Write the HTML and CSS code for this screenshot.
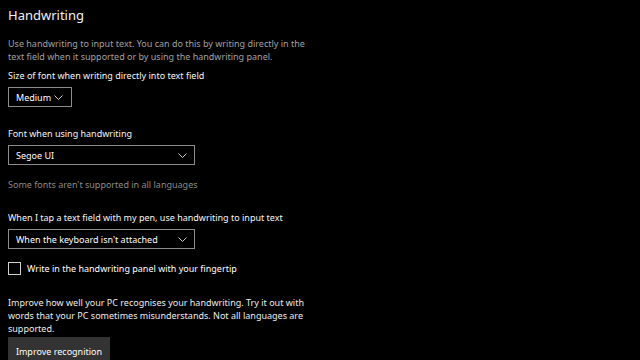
FILE: index.html
```html
<!DOCTYPE html>
<html lang="en">
<head>
    <meta charset="UTF-8">
    <title>Handwriting</title>
    <link rel="stylesheet" href="styles.css">
</head>
<body>

<div class="page">
    <h1 class="title">Handwriting</h1>

    <p class="desc">Use handwriting to input text. You can do this by writing directly in the<br>text field when it supported or by using the handwriting panel.</p>

    <div class="label label-first">Size of font when writing directly into text field</div>
    <div class="select select-small">
        <span>Medium</span>
        <svg class="chevron" width="9" height="5" viewBox="0 0 9 5"><path d="M0.5 0.5 L4.5 4.5 L8.5 0.5" fill="none" stroke="#ccc" stroke-width="1"/></svg>
    </div>

    <div class="label label-gap">Font when using handwriting</div>
    <div class="select select-wide">
        <span>Segoe UI</span>
        <svg class="chevron" width="9" height="5" viewBox="0 0 9 5"><path d="M0.5 0.5 L4.5 4.5 L8.5 0.5" fill="none" stroke="#ccc" stroke-width="1"/></svg>
    </div>
    <div class="hint">Some fonts aren't supported in all languages</div>

    <div class="label label-gap">When I tap a text field with my pen, use handwriting to input text</div>
    <div class="select select-wide">
        <span>When the keyboard isn't attached</span>
        <svg class="chevron" width="9" height="5" viewBox="0 0 9 5"><path d="M0.5 0.5 L4.5 4.5 L8.5 0.5" fill="none" stroke="#ccc" stroke-width="1"/></svg>
    </div>

    <label class="check-row">
        <span class="checkbox"></span>
        <span>Write in the handwriting panel with your fingertip</span>
    </label>

    <p class="para">Improve how well your PC recognises your handwriting. Try it out with<br>words that your PC sometimes misunderstands. Not all languages are<br>supported.</p>

    <button class="button">Improve recognition</button>
</div>

</body>
</html>
```

FILE: styles.css
```css
body {
    margin: 0;
    background-color: #000;
    color: #fff;
    font-family: 'Noto Sans', 'Open Sans', sans-serif;
    font-size: 9px;
    overflow: hidden;
}

.page {
    padding: 5px 0 0 8px;
}

.title {
    margin: 0;
    font-size: 13px;
    font-weight: normal;
    line-height: 20px;
    color: #f2f2f2;
}

.desc {
    margin: 12px 0 0;
    line-height: 13px;
    color: #a0a0a0;
}

.label {
    line-height: 13px;
    color: #f5f5f5;
}

.label-first {
    margin-top: 6px;
}

.label-gap {
    margin-top: 20px;
}

.select {
    display: flex;
    align-items: center;
    justify-content: space-between;
    box-sizing: border-box;
    height: 20px;
    margin-top: 5px;
    padding: 0 8px 0 7px;
    border: 1.5px solid #8c8c8c;
    color: #fff;
}

.select-small {
    width: 64px;
}

.select-wide {
    width: 187px;
    padding-right: 7px;
}

.chevron {
    display: block;
}

.hint {
    margin-top: 13px;
    line-height: 13px;
    color: #8a8a8a;
}

.check-row {
    display: flex;
    align-items: center;
    gap: 6px;
    margin-top: 13px;
    line-height: 13px;
}

.checkbox {
    box-sizing: border-box;
    width: 13px;
    height: 13px;
    border: 1.5px solid #d0d0d0;
}

.para {
    margin: 21px 0 0;
    line-height: 13px;
    color: #ececec;
}

.button {
    display: block;
    margin-top: 2px;
    width: 102px;
    height: 28px;
    padding: 0;
    border: none;
    background-color: #333;
    color: #fff;
    font-family: inherit;
    font-size: 9px;
}
```
